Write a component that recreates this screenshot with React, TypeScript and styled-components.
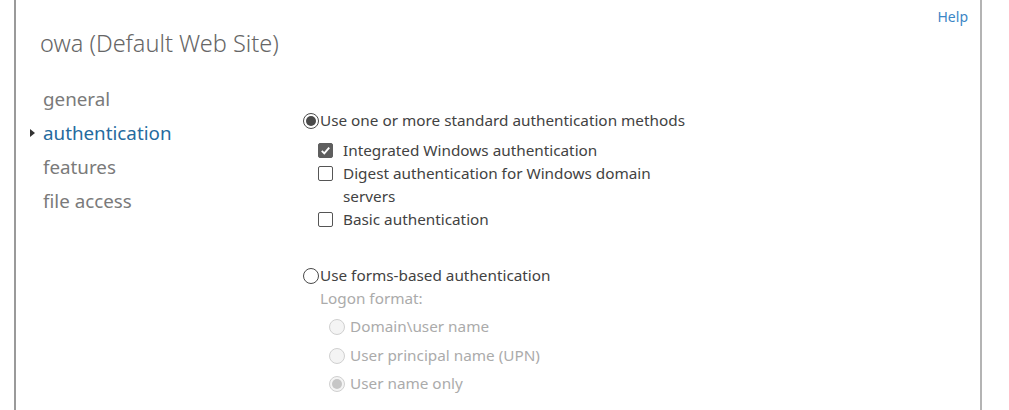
import styled, { createGlobalStyle } from 'styled-components';

const GlobalStyle = createGlobalStyle`
  html, body {
    margin: 0;
    padding: 0;
    background: #ffffff;
  }
  body {
    font-family: 'Noto Sans', 'Open Sans', sans-serif;
  }
`;

const Dialog = styled.div`
  margin-left: 14px;
  width: 968px;
  height: 410px;
  border-left: 2px solid #9a9a9a;
  border-right: 2px solid #b4b4b4;
  box-sizing: border-box;
  background: #fff;
  display: flex;
  flex-direction: column;
`;

const HelpBar = styled.div`
  display: flex;
  justify-content: flex-end;
  padding: 7px 12px 0 0;
  height: 21px;
`;

const HelpLink = styled.a`
  font-size: 14px;
  color: #3b86c6;
  text-decoration: none;
  cursor: pointer;
`;

const Title = styled.h1`
  margin: 0;
  padding-left: 24px;
  font-size: 23.5px;
  font-weight: 300;
  line-height: 30px;
  color: #666666;
`;

const Body = styled.div`
  display: grid;
  grid-template-columns: 287px 1fr;
  margin-top: 24px;
`;

const Nav = styled.ul`
  list-style: none;
  margin: 0;
  padding: 0;
`;

const NavItem = styled.li<{ $active?: boolean }>`
  position: relative;
  padding-left: 27px;
  font-size: 18.8px;
  line-height: 34px;
  color: ${({ $active }) => ($active ? '#256a9e' : '#7a7a7a')};
  cursor: pointer;
`;

const Caret = styled.span`
  position: absolute;
  left: 14px;
  top: 13px;
  width: 0;
  height: 0;
  border-top: 4px solid transparent;
  border-bottom: 4px solid transparent;
  border-left: 5px solid #333;
`;

const Content = styled.div`
  padding-top: 27px;
  font-size: 15.3px;
  color: #424242;
`;

const Row = styled.label<{ $indent?: number; $muted?: boolean }>`
  display: flex;
  align-items: flex-start;
  padding-left: ${({ $indent }) => $indent ?? 0}px;
  line-height: 23px;
  color: ${({ $muted }) => ($muted ? '#ababab' : '#424242')};
`;

const RadioCircle = styled.span<{ $checked?: boolean; $disabled?: boolean }>`
  flex: none;
  box-sizing: border-box;
  width: 16px;
  height: 16px;
  margin: 4px ${({ $disabled }) => ($disabled ? 5 : 1)}px 0 0;
  border-radius: 50%;
  border: 1px solid ${({ $disabled }) => ($disabled ? '#d0d0d0' : '#4a4a4a')};
  background: ${({ $disabled }) => ($disabled ? '#f4f4f4' : '#fff')};
  display: flex;
  align-items: center;
  justify-content: center;
  &::after {
    content: '';
    display: ${({ $checked }) => ($checked ? 'block' : 'none')};
    width: 10px;
    height: 10px;
    border-radius: 50%;
    background: ${({ $disabled }) => ($disabled ? '#c6c6c6' : '#4a4a4a')};
  }
`;

const CheckSquare = styled.span<{ $checked?: boolean }>`
  flex: none;
  box-sizing: border-box;
  width: 15px;
  height: 15px;
  margin: 4px 10px 0 0;
  border-radius: 2px;
  border: 1px solid ${({ $checked }) => ($checked ? '#5e5e5e' : '#555')};
  background: ${({ $checked }) => ($checked ? '#5e5e5e' : '#fff')};
  display: flex;
  align-items: center;
  justify-content: center;
`;

const Group = styled.div<{ $top?: number }>`
  margin-top: ${({ $top }) => $top ?? 0}px;
`;

const SubRadios = styled.div`
  display: flex;
  flex-direction: column;
  gap: 5.5px;
  margin-top: 5px;
`;

const Check = () => (
  <svg width="11" height="11" viewBox="0 0 11 11">
    <path d="M1.8 5.8 L4.3 8.3 L9.2 2.6" fill="none" stroke="#fff" strokeWidth="1.9" />
  </svg>
);

const navItems = ['general', 'authentication', 'features', 'file access'];

export default function App() {
  return (
    <>
      <GlobalStyle />
      <Dialog>
        <HelpBar>
          <HelpLink>Help</HelpLink>
        </HelpBar>
        <Title>owa (Default Web Site)</Title>
        <Body>
          <Nav>
            {navItems.map((item) => (
              <NavItem key={item} $active={item === 'authentication'}>
                {item === 'authentication' && <Caret />}
                {item}
              </NavItem>
            ))}
          </Nav>
          <Content>
            <Row>
              <RadioCircle $checked />
              Use one or more standard authentication methods
            </Row>
            <Group $top={7}>
              <Row $indent={15}>
                <CheckSquare $checked>
                  <Check />
                </CheckSquare>
                Integrated Windows authentication
              </Row>
              <Row $indent={15}>
                <CheckSquare />
                <span>
                  Digest authentication for Windows domain
                  <br />
                  servers
                </span>
              </Row>
              <Row $indent={15}>
                <CheckSquare />
                Basic authentication
              </Row>
            </Group>
            <Group $top={33}>
              <Row>
                <RadioCircle />
                Use forms-based authentication
              </Row>
              <Row $indent={17} $muted>
                Logon format:
              </Row>
              <SubRadios>
                <Row $indent={26} $muted>
                  <RadioCircle $disabled />
                  Domain\user name
                </Row>
                <Row $indent={26} $muted>
                  <RadioCircle $disabled />
                  User principal name (UPN)
                </Row>
                <Row $indent={26} $muted>
                  <RadioCircle $disabled $checked />
                  User name only
                </Row>
              </SubRadios>
            </Group>
          </Content>
        </Body>
      </Dialog>
    </>
  );
}
